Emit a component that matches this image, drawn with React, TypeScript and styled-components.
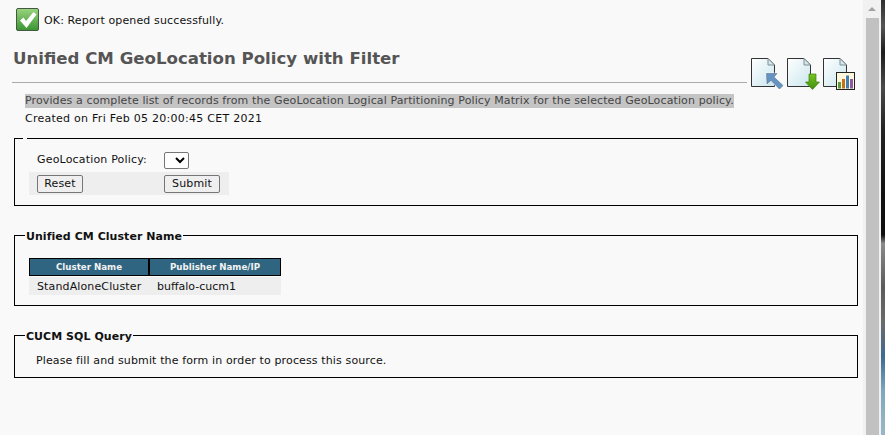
import React from "react";
import styled, { createGlobalStyle } from "styled-components";

const Global = createGlobalStyle`
  html, body { margin: 0; padding: 0; overflow: hidden; background: #f9f9f9; }
`;

const Page = styled.div`
  display: flex;
  width: 885px;
  height: 435px;
  overflow: hidden;
  font-family: "DejaVu Sans", Verdana, sans-serif;
  font-size: 11px;
  letter-spacing: 0.13px;
  color: #111;
`;

const Main = styled.main`
  width: 863px;
  flex: none;
  box-sizing: border-box;
  background: #f9f9f9;
  padding: 8px 5px 0 12px;
`;

const Status = styled.div`
  display: flex;
  align-items: center;
  gap: 4px;
  height: 24px;
  padding-left: 4px;
`;

const Title = styled.h1`
  margin: 15px 0 0 1px;
  height: 24px;
  font-size: 16.6px;
  line-height: 24px;
  font-weight: 700;
  letter-spacing: 0;
  color: #555;
`;

const HeaderRow = styled.div`
  display: flex;
  align-items: flex-start;
  height: 20px;
`;

const Rule = styled.div`
  width: 735px;
  height: 1px;
  margin-top: 11px;
  background: #aaa;
`;

const Tools = styled.div`
  display: flex;
  gap: 3px;
  margin: -13px 0 0 4px;
  position: relative;
`;

const Summary = styled.div`
  margin: 3px 0 0 13px;
  line-height: 14px;
`;

const Marked = styled.span`
  display: inline-block;
  height: 14px;
  background: #c4c4c4;
  color: #444;
  letter-spacing: 0.115px;
`;

const Created = styled.div`
  margin-top: 4px;
  line-height: 14px;
  height: 26px;
  letter-spacing: 0.26px;
`;

const Group = styled.fieldset<{ $top: number; $height: number }>`
  box-sizing: border-box;
  width: 844px;
  height: ${(p) => p.$height}px;
  margin: ${(p) => p.$top}px 0 0 2px;
  padding: 0 14px;
  border: 1px solid #000;
`;

const Legend = styled.legend`
  padding: 4px 1px 0;
  margin-left: -4px;
  font-size: 11px;
  line-height: 14px;
  font-weight: 700;
  letter-spacing: 0.05px;
  color: #111;
`;

const EmptyLegend = styled.legend`
  margin-left: -6px;
  padding: 0;
  width: 4px;
  height: 1px;
`;

const FormTable = styled.div`
  width: 200px;
  margin-top: 10px;
  display: grid;
  grid-template-columns: 135px 65px;
`;

const Label = styled.div`
  height: 23px;
  padding-left: 8px;
  line-height: 21px;
  letter-spacing: 0.18px;
`;

const SelectBox = styled.div`
  height: 23px;
  display: flex;
  align-items: center;
`;

const FakeSelect = styled.select`
  width: 25px;
  height: 17px;
  box-sizing: border-box;
  padding: 0;
  border: 1px solid #767676;
  border-radius: 2px;
  background: #fff;
  font-size: 11px;
`;

const ButtonCell = styled.div<{ $first?: boolean }>`
  height: 23px;
  background: #eeeeee;
  display: flex;
  align-items: center;
  padding-left: ${(p) => (p.$first ? 8 : 0)}px;
`;

const Btn = styled.button<{ $w: number }>`
  width: ${(p) => p.$w}px;
  height: 18px;
  box-sizing: border-box;
  padding: 0;
  font-family: inherit;
  font-size: 11px;
  line-height: 14px;
  letter-spacing: 0.13px;
  color: #111;
  background: #efefef;
  border: 1px solid #767676;
  border-radius: 2px;
`;

const DataTable = styled.table`
  margin-top: 14px;
  border-collapse: separate;
  border-spacing: 0;
  table-layout: fixed;
  width: 252px;
`;

const Th = styled.th<{ $w: number }>`
  width: ${(p) => p.$w}px;
  height: 18px;
  box-sizing: border-box;
  padding: 0;
  background: #2f6580;
  color: #f2f2f2;
  border: 1px solid #000;
  font-size: 8.7px;
  letter-spacing: 0;
  font-weight: 700;
  text-align: center;
`;

const Td = styled.td<{ $tight?: boolean }>`
  height: 18px;
  padding: 0 0 0 8px;
  background: #eeeeee;
  white-space: nowrap;
  letter-spacing: ${(p) => (p.$tight ? 0 : 0.13)}px;
`;

const Spacer = styled.tr`
  height: 1px;
`;

const Note = styled.div`
  margin: 10px 0 0 7px;
  line-height: 14px;
`;

const Scrollbar = styled.div`
  width: 18px;
  flex: none;
  background: #f1f1f1;
  display: flex;
  flex-direction: column;
  align-items: center;
`;

const ArrowBtn = styled.div`
  height: 18px;
  width: 100%;
  display: flex;
  align-items: center;
  justify-content: center;
  &::before {
    content: "";
    border-left: 4px solid transparent;
    border-right: 4px solid transparent;
    border-bottom: 4px solid #a3a3a3;
  }
`;

const Thumb = styled.div`
  width: 13px;
  margin-left: 1px;
  flex: 1;
  background: #c1c1c1;
`;

const Desktop = styled.div`
  width: 4px;
  flex: none;
  background: linear-gradient(
    180deg,
    #2e2e2e 0%, #555 6%, #1c1c1c 12%, #4a4a4a 20%, #222 30%, #111 45%, #0d0d0d 54%,
    #8a8a8a 56%, #5b5b5b 66%, #6a6a6a 74%, #3f6a90 82%, #7fa8bd 90%, #9ab8c6 100%
  );
`;

const CheckIcon = () => (
  <svg width="24" height="24" viewBox="0 0 24 24">
    <defs>
      <linearGradient id="ck" x1="0" y1="0" x2="0" y2="1">
        <stop offset="0" stopColor="#9ad480" />
        <stop offset="1" stopColor="#3a9432" />
      </linearGradient>
    </defs>
    <rect x="0.5" y="0.5" width="22" height="22" rx="1.5" fill="url(#ck)" stroke="#445a40" />
    <path d="M4 12.5 L7.5 9.5 L10 13 L17.5 4 L20.5 6.5 L10.5 20 Z" fill="#fff" />
  </svg>
);

const DocBase = ({ id }: { id: string }) => (
  <>
    <defs>
      <linearGradient id={id} x1="0" y1="0" x2="1" y2="1">
        <stop offset="0" stopColor="#ffffff" />
        <stop offset="1" stopColor="#c9e6ee" />
      </linearGradient>
    </defs>
    <path d="M0.5 0.5 H17 L23.5 7 V28.5 H0.5 Z" fill={`url(#${id})`} stroke="#333" />
    <path d="M17 0.5 V7 H23.5 Z" fill="#d5e8ee" stroke="#7f8f96" />
  </>
);

const ViewIcon = () => (
  <svg width="33" height="33" viewBox="0 0 33 33">
    <DocBase id="d1" />
    <path
      d="M15.5 15.5 H26 L23 19 L32 27.5 L28.5 31 L20 22.5 L16 26 Z"
      fill="#6593c2"
      stroke="#fff"
      strokeWidth="1.6"
      strokeLinejoin="round"
    />
    <path d="M15.5 15.5 H26 L23 19 L32 27.5 L28.5 31 L20 22.5 L16 26 Z" fill="#6593c2" stroke="#56708a" strokeWidth="0.6" />
  </svg>
);

const DownloadIcon = () => (
  <svg width="33" height="33" viewBox="0 0 33 33">
    <DocBase id="d2" />
    <defs>
      <linearGradient id="ga" x1="0" y1="0" x2="0" y2="1">
        <stop offset="0" stopColor="#76c41f" />
        <stop offset="1" stopColor="#3f8f0c" />
      </linearGradient>
    </defs>
    <path d="M22 16 H29 V24 H32.5 L25.5 31.5 L18.5 24 H22 Z" fill="url(#ga)" stroke="#3d7f10" strokeWidth="0.7" />
  </svg>
);

const ChartIcon = () => (
  <svg width="33" height="33" viewBox="0 0 33 33">
    <DocBase id="d3" />
    <rect x="13.5" y="14.5" width="18" height="17" fill="#fff8dc" stroke="#222" />
    <rect x="15" y="24" width="3" height="6.5" fill="#5f9a3c" />
    <rect x="19" y="21" width="3" height="9.5" fill="#c9701c" />
    <rect x="23" y="17.5" width="3" height="13" fill="#3f7fb5" />
    <rect x="27" y="21" width="3" height="9.5" fill="#8a5ba3" />
  </svg>
);

export default function App() {
  return (
    <Page>
      <Global />
      <Main>
        <Status>
          <CheckIcon />
          <span>OK: Report opened successfully.</span>
        </Status>
        <Title>Unified CM GeoLocation Policy with Filter</Title>
        <HeaderRow>
          <Rule />
          <Tools>
            <ViewIcon />
            <DownloadIcon />
            <ChartIcon />
          </Tools>
        </HeaderRow>
        <Summary>
          <Marked>Provides a complete list of records from the GeoLocation Logical Partitioning Policy Matrix for the selected GeoLocation policy.</Marked>
          <Created>Created on Fri Feb 05 20:00:45 CET 2021</Created>
        </Summary>
        <Group $top={0} $height={68}>
          <EmptyLegend />
          <FormTable>
            <Label>GeoLocation Policy:</Label>
            <SelectBox>
              <FakeSelect aria-label="GeoLocation Policy" />
            </SelectBox>
            <ButtonCell $first>
              <Btn $w={46}>Reset</Btn>
            </ButtonCell>
            <ButtonCell>
              <Btn $w={56}>Submit</Btn>
            </ButtonCell>
          </FormTable>
        </Group>
        <Group $top={20} $height={80}>
          <Legend>Unified CM Cluster Name</Legend>
          <DataTable>
            <thead>
              <tr>
                <Th $w={120}>Cluster Name</Th>
                <Th $w={132}>Publisher Name/IP</Th>
              </tr>
            </thead>
            <tbody>
              <Spacer />
              <tr>
                <Td>StandAloneCluster</Td>
                <Td $tight>buffalo-cucm1</Td>
              </tr>
            </tbody>
          </DataTable>
        </Group>
        <Group $top={20} $height={52}>
          <Legend>CUCM SQL Query</Legend>
          <Note>Please fill and submit the form in order to process this source.</Note>
        </Group>
      </Main>
      <Scrollbar>
        <ArrowBtn />
        <Thumb />
      </Scrollbar>
      <Desktop />
    </Page>
  );
}
